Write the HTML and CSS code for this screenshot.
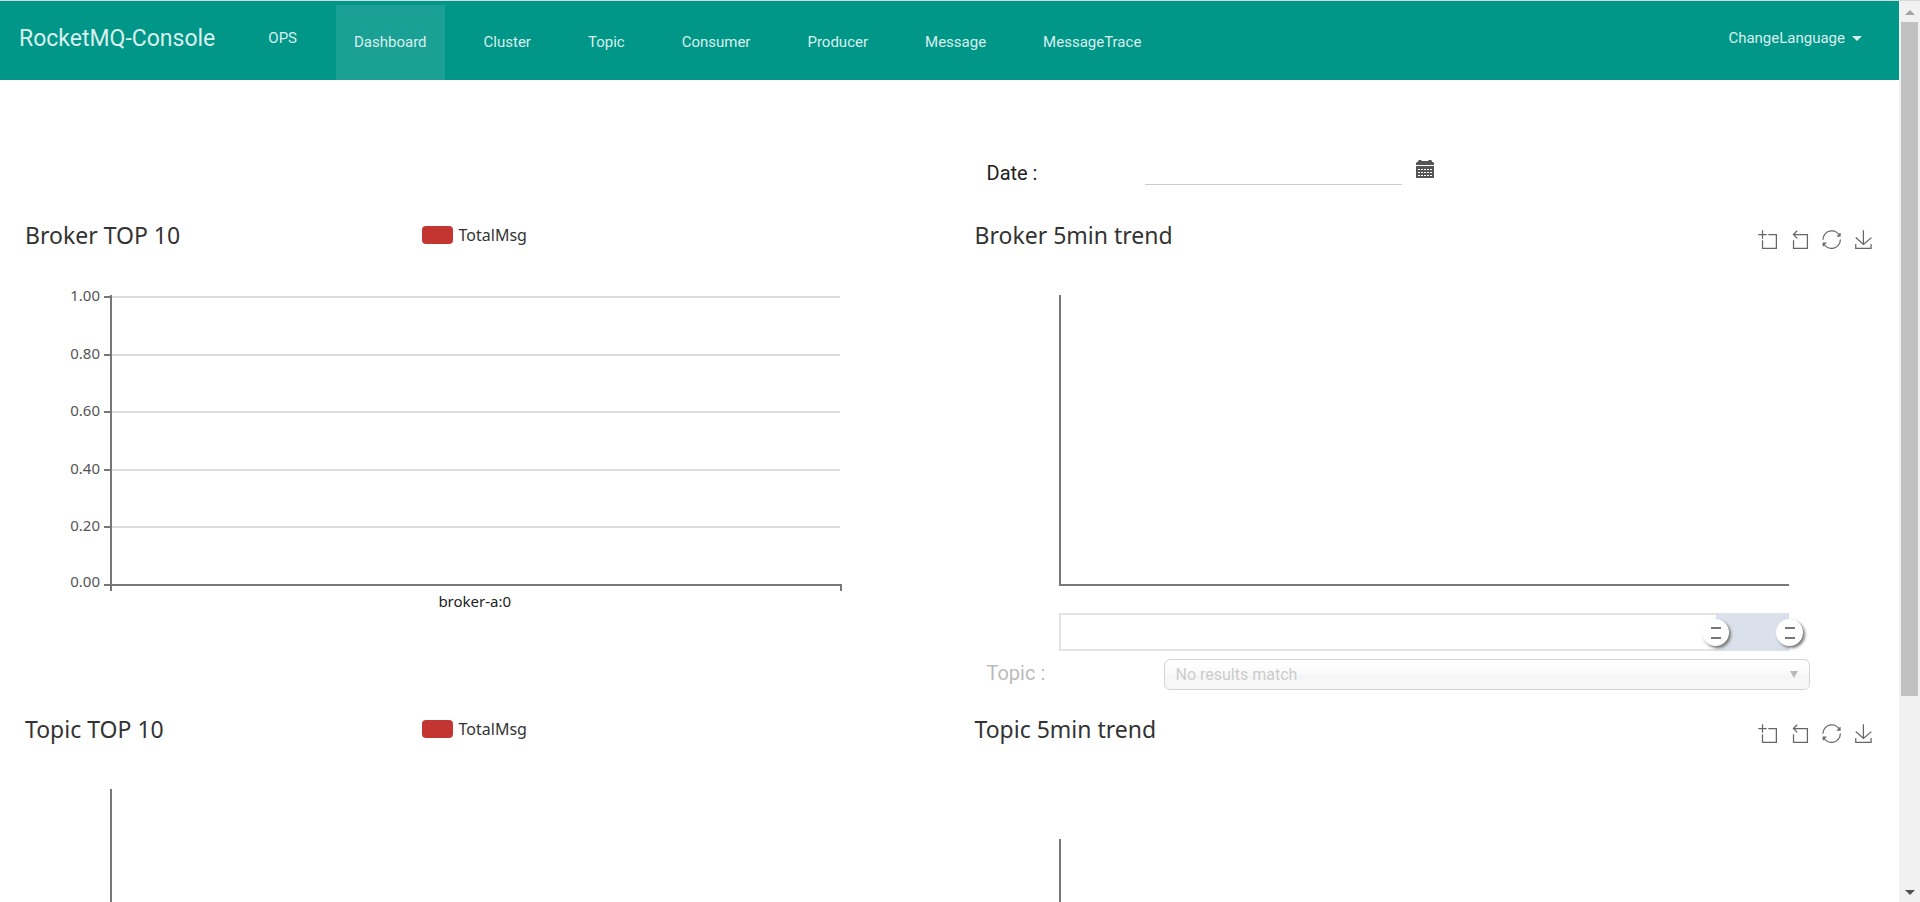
FILE: index.html
```
<!DOCTYPE html>
<html lang="en">
<head>
    <meta charset="UTF-8">
    <meta name="viewport" content="width=device-width, initial-scale=1.0">
    <title>RocketMQ-Console</title>
    <link rel="stylesheet" href="styles.css">
</head>
<body>
    <!-- toolbox icons -->
    <svg class="sprite" aria-hidden="true">
        <symbol id="icon-zoom" viewBox="-1 -1 61 61"><path d="M0,13.5h26.9 M13.5,26.9V0 M32.1,13.5H58V58H13.5 V32.1"/></symbol>
        <symbol id="icon-back" viewBox="-1 -1 61 61"><path d="M22,1.4L9.9,13.5l12.3,12.3 M10.3,13.5H54.9v44.6 H10.3v-26"/></symbol>
        <symbol id="icon-restore" viewBox="-1 -1 61 61"><path d="M47,18.9h9.8V8.7 M56.3,20.1 C52.1,9,40.5,0.6,26.8,2.1C12.6,3.7,1.6,16.2,2.1,30.6 M13,41.1H3.1v10.2 M3.7,39.9c4.2,11.1,15.8,19.5,29.5,18 c14.2-1.6,25.2-14.1,24.7-28.5"/></symbol>
        <symbol id="icon-save" viewBox="-1 -1 61 61"><path d="M4.7,22.9L29.3,45.5L54.7,23.4M4.6,43.6L4.6,58L53.8,58L53.8,43.6M29.2,45.1L29.2,0"/></symbol>
    </svg>

    <div class="page">
        <header class="navbar">
            <a href="#" class="brand">RocketMQ-Console</a>
            <nav class="nav">
                <a href="#" class="ops">OPS</a>
                <a href="#" class="nav-link active">Dashboard</a>
                <a href="#" class="nav-link">Cluster</a>
                <a href="#" class="nav-link">Topic</a>
                <a href="#" class="nav-link">Consumer</a>
                <a href="#" class="nav-link">Producer</a>
                <a href="#" class="nav-link">Message</a>
                <a href="#" class="nav-link">MessageTrace</a>
            </nav>
            <button type="button" class="language">ChangeLanguage <span class="caret"></span></button>
        </header>

        <main class="dashboard">
            <div class="column left">
                <section class="chart">
                    <div class="chart-head">
                        <h2>Broker TOP 10</h2>
                        <button type="button" class="legend"><span class="swatch"></span>TotalMsg</button>
                    </div>
                    <div class="plot ticks">
                        <div class="grid-row"><span>1.00</span></div>
                        <div class="grid-row"><span>0.80</span></div>
                        <div class="grid-row"><span>0.60</span></div>
                        <div class="grid-row"><span>0.40</span></div>
                        <div class="grid-row"><span>0.20</span></div>
                        <div class="grid-row zero"><span>0.00</span></div>
                    </div>
                    <p class="category">broker-a:0</p>
                </section>
                <section class="chart">
                    <div class="chart-head">
                        <h2>Topic TOP 10</h2>
                        <button type="button" class="legend"><span class="swatch"></span>TotalMsg</button>
                    </div>
                    <div class="plot"></div>
                </section>
            </div>

            <div class="column">
                <form class="row date-row">
                    <label for="date">Date :</label>
                    <input type="text" id="date" class="date-input">
                    <button type="button" class="calendar" aria-label="Pick a date">
                        <svg viewBox="0 0 18 18" width="18" height="18">
                            <path fill="#555" d="M1 2h1V1l1-1h2l1 1h6l1-1h2l1 1v1h1l1 1v2H0V3zM0 6h18v12H0z"/>
                            <path stroke="#fff" stroke-dasharray="2 1" d="M2 9.500h14M2 12.500h14M2 15.500h14"/>
                        </svg>
                    </button>
                </form>
                <section class="chart trend">
                    <div class="chart-head">
                        <h2>Broker 5min trend</h2>
                        <div class="toolbox">
                            <button type="button" aria-label="Zoom"><svg><use href="#icon-zoom"/></svg></button>
                            <button type="button" aria-label="Back"><svg><use href="#icon-back"/></svg></button>
                            <button type="button" aria-label="Restore"><svg><use href="#icon-restore"/></svg></button>
                            <button type="button" aria-label="Save"><svg><use href="#icon-save"/></svg></button>
                        </div>
                    </div>
                    <div class="plot"></div>
                    <div class="data-zoom">
                        <div class="zoom-range">
                            <button type="button" class="handle start" aria-label="Range start"></button>
                            <button type="button" class="handle end" aria-label="Range end"></button>
                        </div>
                    </div>
                </section>
                <form class="row topic-row">
                    <label for="topic">Topic :</label>
                    <div class="select">
                        <select id="topic" disabled>
                            <option>No results match</option>
                        </select>
                    </div>
                </form>
                <section class="chart trend topic-trend">
                    <div class="chart-head">
                        <h2>Topic 5min trend</h2>
                        <div class="toolbox">
                            <button type="button" aria-label="Zoom"><svg><use href="#icon-zoom"/></svg></button>
                            <button type="button" aria-label="Back"><svg><use href="#icon-back"/></svg></button>
                            <button type="button" aria-label="Restore"><svg><use href="#icon-restore"/></svg></button>
                            <button type="button" aria-label="Save"><svg><use href="#icon-save"/></svg></button>
                        </div>
                    </div>
                    <div class="plot"></div>
                </section>
            </div>
        </main>
    </div>

    <div class="scrollbar" aria-hidden="true">
        <span class="arrow up"></span>
        <div class="track"><div class="thumb"></div></div>
        <span class="arrow down"></span>
    </div>
</body>
</html>
```
FILE: styles.css
```
* {
    margin: 0;
    padding: 0;
    box-sizing: border-box;
}
body {
    display: flex;
    height: 100vh;
    overflow: hidden;
    border-top: 1px solid #d3dbdf;
    background: #fff;
    color: #212121;
    font-family: Roboto, sans-serif;
    font-size: 16px;
}
button {
    border: none;
    background: none;
    font: inherit;
    color: inherit;
    cursor: pointer;
}
a {
    color: inherit;
    text-decoration: none;
}
.sprite {
    display: none;
}
.page {
    flex: 1;
    min-width: 0;
    overflow: hidden;
}

/* navbar */
.navbar {
    display: flex;
    height: 79px;
    padding: 0 37px 0 19px;
    background: #009688;
    color: #d9efed;
    font-size: 15px;
}
.brand {
    font-size: 23px;
    line-height: 75px;
}
.nav {
    display: flex;
    flex: 1;
    gap: 21px;
    margin-left: 53px;
}
.ops {
    margin-right: 18px;
    line-height: 74px;
}
.nav-link {
    margin-top: 4px;
    padding: 0 18px;
    line-height: 74px;
}
.nav-link.active {
    background: rgba(255, 255, 255, 0.1);
}
.language {
    display: flex;
    align-items: center;
    gap: 7px;
    height: 74px;
}
.caret {
    border: 5px solid transparent;
    border-top-color: currentColor;
    border-bottom: none;
}

/* charts */
.dashboard {
    display: grid;
    grid-template-columns: 1fr 1fr;
}
.left {
    padding-top: 132px;
}
.chart {
    height: 494px;
    font-family: "Noto Sans", "Open Sans", sans-serif;
    font-size: 15px;
    color: #333;
}
.chart-head {
    display: grid;
    grid-template-columns: 1fr auto 1fr;
    height: 83px;
    padding: 6px 26px 0 25px;
}
.chart-head h2 {
    font-size: 23px;
    font-weight: 400;
    line-height: 34px;
    white-space: nowrap;
}
.legend {
    display: flex;
    align-items: center;
    gap: 6px;
    height: 34px;
    font-size: 16px;
    line-height: 22px;
}
.swatch {
    width: 31px;
    height: 18px;
    border-radius: 4px;
    background: #c23531;
}
.plot {
    height: 291px;
    margin: 0 110px;
    border-left: 2px solid #777;
}
.column:last-child .plot {
    margin-left: 109px;
}
.ticks,
.trend .plot {
    border-bottom: 2px solid #777;
}
.ticks {
    position: relative;
    display: grid;
    grid-template-rows: repeat(5, 1fr) 0;
    padding-top: 1px;
    color: #555;
}
.grid-row {
    position: relative;
    border-top: 2px solid #ddd;
}
/* axis tick marks */
.grid-row::before {
    content: "";
    position: absolute;
    top: -2px;
    left: -8px;
    width: 6px;
    height: 2px;
    background: #777;
}
.grid-row.zero {
    border: none;
}
.grid-row.zero::before {
    top: 0;
}
.ticks::before,
.ticks::after {
    content: "";
    position: absolute;
    top: 100%;
    left: -2px;
    width: 2px;
    height: 7px;
    background: #777;
}
.ticks::after {
    left: 100%;
}
.grid-row span {
    position: absolute;
    top: -14px;
    right: 100%;
    margin-right: 12px;
    line-height: 22px;
}
.category {
    color: #222;
    line-height: 30px;
    text-align: center;
}
.trend {
    height: 440px;
}
.trend .chart-head {
    grid-template-columns: 1fr auto;
}
.toolbox {
    display: flex;
    gap: 13px;
    padding-top: 12px;
}
.toolbox button,
.toolbox svg {
    display: block;
    width: 19px;
    height: 19px;
}
.toolbox svg {
    fill: none;
    stroke: #666;
    stroke-width: 4;
}

/* data zoom */
.data-zoom {
    display: flex;
    justify-content: flex-end;
    height: 38px;
    margin: 27px 110px 0 109px;
    border: 2px solid #e4e4e4;
    border-right: none;
}
.zoom-range {
    position: relative;
    width: 10%;
    margin: -2px 0;
    background: #dae1eb;
}
.handle {
    position: absolute;
    top: 6px;
    width: 27px;
    height: 27px;
    border-radius: 50%;
    background: #fff;
    box-shadow: 2px 2px 3px #777;
}
.handle.start {
    left: -14px;
}
.handle.end {
    right: -14px;
}
.handle::before {
    content: "";
    display: block;
    width: 10px;
    height: 8px;
    margin: 0 auto;
    border: solid #777;
    border-width: 2px 0;
}

/* form rows */
.row {
    display: flex;
    padding-left: 37px;
    font-size: 20px;
}
.row label {
    width: 158px;
}
.date-row {
    height: 132px;
    padding-top: 74px;
}
.date-row label {
    line-height: 38px;
}
.date-input {
    width: 257px;
    height: 31px;
    border: none;
    border-bottom: 1px solid #ccc;
    outline: none;
    font: inherit;
}
.calendar {
    height: 18px;
    margin: 5px 0 0 14px;
}
.topic-row {
    height: 54px;
    padding-top: 7px;
    padding-right: 89px;
    opacity: 0.5;
}
.topic-row label {
    width: 177px;
    color: #777;
    line-height: 28px;
}
.select {
    position: relative;
    flex: 1;
}
.select select {
    appearance: none;
    width: 100%;
    height: 31px;
    padding: 0 11px;
    border: 1px solid #aaa;
    border-radius: 6px;
    background: linear-gradient(#fff 20%, #f6f6f6 50%, #eee 52%, #f4f4f4 100%);
    color: #999;
    opacity: 1;
    font-family: inherit;
    font-size: 16px;
}
.select::after {
    content: "";
    position: absolute;
    top: 12px;
    right: 12px;
    border: 4px solid transparent;
    border-top: 7px solid #777;
    border-bottom: none;
}
.topic-trend .chart-head {
    height: 133px;
}

/* window scrollbar */
.scrollbar {
    display: flex;
    flex-direction: column;
    align-items: center;
    width: 21px;
    background: #f1f1f1;
}
.track {
    flex: 1;
    width: 17px;
}
.thumb {
    height: 78.5%;
    background: #c1c1c1;
}
.arrow {
    height: 21px;
    padding-top: 9px;
}
.arrow::before {
    content: "";
    display: block;
    border: 5px solid transparent;
}
.arrow.up::before {
    border-top: none;
    border-bottom-color: #a3a3a3;
}
.arrow.down::before {
    border-bottom: none;
    border-top-color: #505050;
}
```
